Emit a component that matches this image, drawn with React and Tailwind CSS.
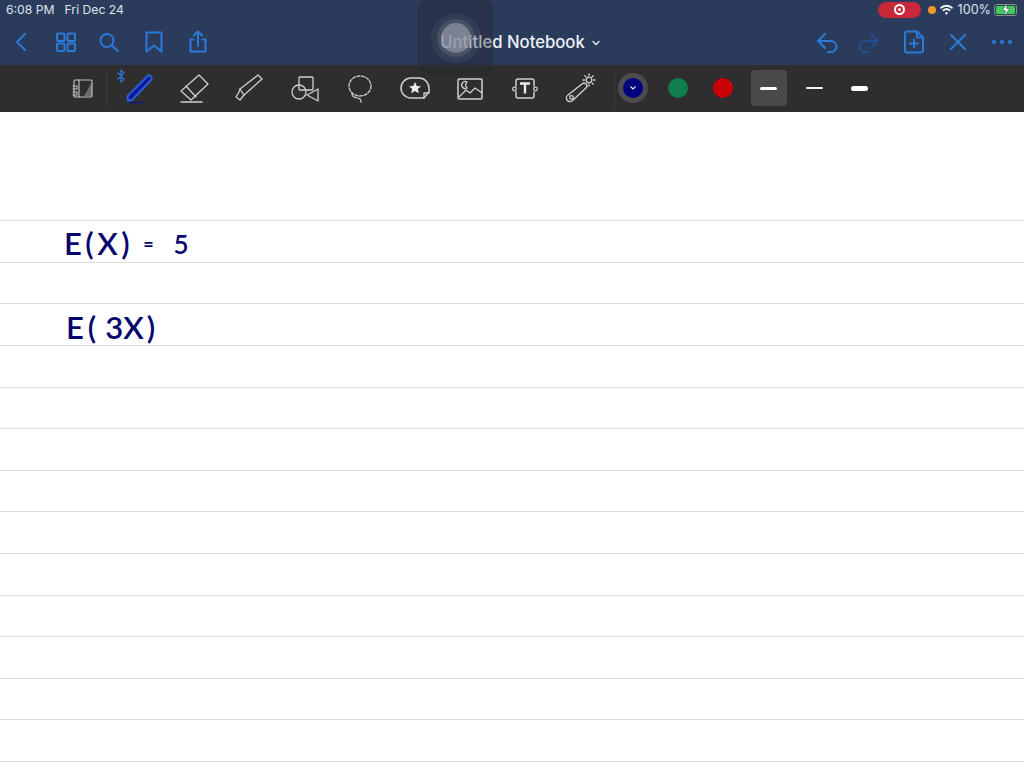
const Nav = ({ children, dim }) => (
  <div className="w-[44px] h-[44px] flex items-center justify-center">
    <svg width="28" height="28" viewBox="0 0 28 28" fill="none" stroke={dim ? "#22508f" : "#2a7ad8"} strokeWidth="2" strokeLinecap="round" strokeLinejoin="round">{children}</svg>
  </div>
);

const Tool = ({ children }) => (
  <div className="w-[55.2px] h-[46px] shrink-0 flex items-center justify-center">
    <svg width="36" height="36" viewBox="0 0 36 36" fill="none" stroke="#cfcfcf" strokeWidth="1.3" strokeLinecap="round" strokeLinejoin="round" className="overflow-visible">{children}</svg>
  </div>
);

const Row = ({ children, first }) => (
  <div className={`${first ? "h-[109.2px]" : "h-[41.6px]"} shrink-0 box-border border-b-[1.5px] border-[#dcdcdc] flex items-center pl-[64px] pt-[5px] font-['Lato',sans-serif] text-[#06066e] text-[31px] font-semibold leading-none`}>
    {children}
  </div>
);

export default function App() {
  return (
    <div className="relative w-[1024px] h-[768px] overflow-hidden bg-white flex flex-col font-['Inter',sans-serif]">
      <header className="h-[65px] shrink-0 bg-[#2b3b5b] flex flex-col">
        <div className="h-[20px] flex items-center justify-between pl-[6px] pr-[5px] text-[12.2px] text-[#dfe4ec]">
          <div className="flex gap-[10px]">
            <span>6:08 PM</span>
            <span>Fri Dec 24</span>
          </div>
          <div className="flex items-center">
            <div className="w-[43px] h-[16px] rounded-full bg-[#c8283a] flex items-center justify-center mr-[7px]">
              <div className="w-[11px] h-[11px] rounded-full border-2 border-white flex items-center justify-center">
                <div className="w-[3px] h-[3px] rounded-full bg-white" />
              </div>
            </div>
            <div className="w-[8px] h-[8px] rounded-full bg-[#f0962a] mr-[4px]" />
            <svg width="13" height="11" viewBox="0 0 13 11" fill="none" stroke="#eef1f5" strokeWidth="1.900" strokeLinecap="round" className="mr-[5px]">
              <path d="M1.200 3.800a8 8 0 0 1 10.600 0" />
              <path d="M3.500 6.300a4.500 4.500 0 0 1 6 0" />
              <circle cx="6.500" cy="9.300" r="1.200" fill="#eef1f5" stroke="none" />
            </svg>
            <span className="text-[12.6px] mr-[3px]">100%</span>
            <div className="w-[23px] h-[12px] rounded-[3px] border border-[#7f9a80] p-[1px] mr-[2px]">
              <div className="w-full h-full rounded-[2px] bg-[#3fce5a] flex items-center justify-center">
                <svg width="10" height="13" viewBox="0 0 9 12" fill="#ffffff" stroke="#2b3b5b" strokeWidth="0.5" className="overflow-visible"><path d="M5.500 0 1 7h3l-1 5 5-7H5z" /></svg>
              </div>
            </div>
          </div>
        </div>
        <nav className="h-[44px] grid grid-cols-3 items-center">
          <div className="flex">
            <Nav><path d="M17 6l-8 8 8 8" /></Nav>
            <Nav>
              <rect x="5" y="5.500" width="7.500" height="7.500" rx="1" />
              <rect x="15.500" y="5.500" width="7.500" height="7.500" rx="1" />
              <rect x="5" y="15.500" width="7.500" height="7.500" rx="1" />
              <rect x="15.500" y="15.500" width="7.500" height="7.500" rx="1" />
            </Nav>
            <Nav><circle cx="11" cy="12.500" r="6.500" /><path d="M16 17.500l6 5.500" /></Nav>
            <Nav><path d="M6.500 4.500h15v19l-7.500-6-7.500 6z" /></Nav>
            <Nav><path d="M9.500 11.500H6.500v12h15v-12h-3" /><path d="M14 18V3.500M9.800 7.500L14 3.500l4.200 4" /></Nav>
          </div>
          <div className="flex items-center justify-center gap-[7px] pl-[16px] pt-[2px] text-[16.700px] font-medium text-[#eef1f6]">
            <span>Untitled Notebook</span>
            <svg width="8" height="6" viewBox="0 0 8 6" fill="none" stroke="#dfe4ec" strokeWidth="1.400" strokeLinecap="round"><path d="M1 1.500l3 3 3-3" /></svg>
          </div>
          <div className="flex justify-end">
            <Nav><path d="M13 6l-7 7 7 7" /><path d="M6 13h13a5.500 5.500 0 0 1 0 11h-3" /></Nav>
            <Nav dim><path d="M15 6l7 7-7 7" /><path d="M22 13H9a5.500 5.500 0 0 0 0 11h3" /></Nav>
            <Nav>
              <path d="M7 3.500h10l6 6v13a2 2 0 0 1-2 2H7a2 2 0 0 1-2-2v-17a2 2 0 0 1 2-2z" />
              <path d="M17 3.500v6h6M14 11.500v8M10 15.500h8" />
            </Nav>
            <Nav><path d="M7 7l14 14M21 7L7 21" /></Nav>
            <Nav>
              <circle cx="6" cy="14" r="2" fill="#2a7ad8" stroke="none" />
              <circle cx="14" cy="14" r="2" fill="#2a7ad8" stroke="none" />
              <circle cx="22" cy="14" r="2" fill="#2a7ad8" stroke="none" />
            </Nav>
          </div>
        </nav>
      </header>

      <div className="h-[47px] shrink-0 bg-[#2e2e2f] flex items-center pl-[58px] pb-[1px]">
        <div className="w-[48px] h-[46px] flex items-center justify-center">
          <svg width="36" height="36" viewBox="0 0 36 36" fill="none" stroke="#c4c4c4" strokeWidth="1.100" strokeLinecap="round" strokeLinejoin="round">
            <path d="M28 12 20 26h8z" fill="#6a6a6a" stroke="none" />
            <path d="M11 10h16a1 1 0 0 1 1 1v15a1 1 0 0 1-1 1H11a1 1 0 0 1-1-1V11a1 1 0 0 1 1-1z" />
            <path d="M15 10v17" />
            <path d="M9 16h4v3H9M9 22h4v3H9" />
          </svg>
        </div>
        <div className="w-px h-[36px] bg-[#3f3f40]" />
        <div className="flex ml-[4.500px]">
          <Tool>
            <path d="M7 31l-.5-5L26 6.500a2.300 2.300 0 0 1 4 3.500L11 30z" stroke="#2a5fd4" strokeWidth="2" fill="#0a1a9a" />
            <path d="M8 32.500h15" stroke="#101a70" strokeWidth="1.500" />
            <path d="M-3 3 3 9 0 12V0l3 3-6 6" stroke="#2a7ad8" strokeWidth="1.200" />
          </Tool>
          <Tool>
            <path d="M23 5 32 14 15 30 5 21z" />
            <path d="M10 16 20 27" />
            <path d="M5 32h21" strokeWidth="1.500" />
          </Tool>
          <Tool>
            <path d="M27 5l4 4-18 16-4-6z" />
            <path d="M9 19l-1 3-3 5 4 3 4-5" />
          </Tool>
          <Tool>
            <rect x="12" y="7" width="14" height="13" rx="1" />
            <circle cx="12" cy="22" r="7" />
            <path d="M31 19v12l-11-6z" />
          </Tool>
          <Tool>
            <ellipse cx="18" cy="16" rx="11" ry="10" strokeDasharray="3 1.600" />
            <path d="M10 24c0 3 3 3 5 4 2 0 4 1 4 4" strokeDasharray="2.500 1.300" />
          </Tool>
          <Tool>
            <path d="M14 8h8a10 10 0 0 1 10 10v4l-5 6H14a10 10 0 0 1 0-20z" strokeWidth="1.500" />
            <path d="M32 23h-5v5" />
            <path d="M18 12l1.800 3.900 4.200.4-3.200 2.800 1 4.100-3.800-2.200-3.800 2.200 1-4.100-3.200-2.800 4.200-.4z" fill="#ececec" stroke="none" />
          </Tool>
          <Tool>
            <rect x="6" y="9" width="24" height="20" rx="1" strokeWidth="1.500" />
            <path d="M7 27l7-7 4 3 5-5 7 5" />
            <path d="M15 12a3.500 3.500 0 1 0 0 6 4 4 0 0 1 0-6z" />
          </Tool>
          <Tool>
            <path d="M9 16v-5a2 2 0 0 1 2-2h14a2 2 0 0 1 2 2v5M9 22v4a2 2 0 0 0 2 2h14a2 2 0 0 0 2-2v-4" strokeWidth="1.500" />
            <circle cx="7.500" cy="19" r="1.800" />
            <circle cx="28.500" cy="19" r="1.800" />
            <path d="M13 13.500h10M18 13.500v10" stroke="#ececec" strokeWidth="2.400" strokeLinecap="butt" />
          </Tool>
          <Tool>
            <path d="M5 25l14-11a2.500 2.500 0 0 1 4 4L9 31a3 3 0 0 1-4-6z" strokeWidth="1.400" />
            <circle cx="8.500" cy="27.500" r="1.800" />
            <circle cx="26" cy="10" r="2.800" />
            <path d="M26 4v1.500M26 14.500V16M20 10h1.500M30.500 10H32M21.800 5.800l1 1M29.200 13.200l1 1M30.200 5.800l-1 1" />
          </Tool>
        </div>
        <div className="w-px h-[36px] bg-[#3f3f40] ml-[5.700px]" />
        <div className="flex items-center gap-[9.300px]">
          <div className="w-[36px] h-[36px] flex items-center justify-center">
            <div className="w-[30px] h-[30px] rounded-full bg-[#4c4c50] flex items-center justify-center">
              <div className="w-[20px] h-[20px] rounded-full bg-[#00007f] flex items-center justify-center">
                <svg width="6" height="4" viewBox="0 0 6 4" fill="none" stroke="#ffffff" strokeWidth="1.200" strokeLinecap="round"><path d="M.8.8 3 3 5.200.8" /></svg>
              </div>
            </div>
          </div>
          <div className="w-[36px] h-[36px] flex items-center justify-center">
            <div className="w-[20px] h-[20px] rounded-full bg-[#0f7f4e]" />
          </div>
          <div className="w-[36px] h-[36px] flex items-center justify-center">
            <div className="w-[20px] h-[20px] rounded-full bg-[#c80008]" />
          </div>
          <div className="w-[36px] h-[36px] rounded-[4px] bg-[#49494b] flex items-center justify-center">
            <div className="w-[17px] h-[3px] rounded-full bg-white" />
          </div>
          <div className="w-[36px] h-[36px] flex items-center justify-center">
            <div className="w-[17px] h-[2px] rounded-full bg-[#f2f2f2]" />
          </div>
          <div className="w-[36px] h-[36px] flex items-center justify-center">
            <div className="w-[17px] h-[5px] rounded-full bg-white" />
          </div>
        </div>
      </div>

      <main className="flex-1 flex flex-col bg-white">
        <Row first />
        <Row>
          <span className="tracking-[3.500px]">E(X)</span>
          <span className="ml-[10px] text-[18px] font-bold">=</span>
          <span className="ml-[20px] text-[26px]">5</span>
        </Row>
        <Row />
        <Row>
          <span className="ml-[2px] tracking-[4px]">E(</span>
          <span className="ml-[5px]">3X</span>
          <span className="ml-[3px]">)</span>
        </Row>
        <Row /><Row /><Row /><Row /><Row /><Row /><Row /><Row /><Row /><Row />
      </main>

      <div className="absolute left-[418px] top-0 w-[75px] h-[76px] rounded-[8px] bg-[#23262f]/35 flex items-center justify-center">
        <div className="w-[50px] h-[50px] rounded-full bg-white/5 flex items-center justify-center">
          <div className="w-[38px] h-[38px] rounded-full bg-white/10 flex items-center justify-center">
            <div className="w-[30px] h-[30px] rounded-full bg-[#9196a8]/70" />
          </div>
        </div>
      </div>
    </div>
  );
}
